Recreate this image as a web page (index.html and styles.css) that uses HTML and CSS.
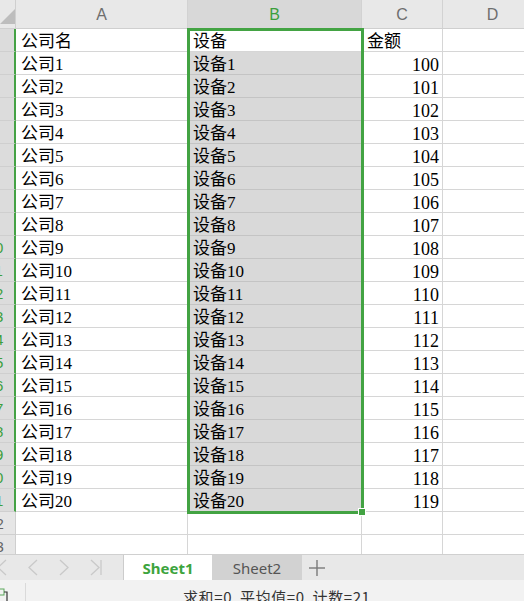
FILE: index.html
```html
<!DOCTYPE html>
<html>
<head>
<meta charset="utf-8">
<link rel="stylesheet" href="styles.css">
</head>
<body>
<div class="app">
  <div class="sheet">
    <div class="grid">
      <div class="row hdr">
        <div class="corner"><svg class="tri" width="34" height="28" viewBox="0 0 34 28"><polygon points="33,9 33,24 18,24" fill="#bdbdbd"/></svg></div>
        <div class="ch">A</div>
        <div class="ch on">B</div>
        <div class="ch">C</div>
        <div class="ch">D</div>
      </div>
      <div class="row"><div class="rh on">1</div><div class="c">公司名</div><div class="c act">设备</div><div class="c">金额</div><div class="c"></div></div>
      <div class="row"><div class="rh on">2</div><div class="c">公司1</div><div class="c sel">设备1</div><div class="c num">100</div><div class="c"></div></div>
      <div class="row"><div class="rh on">3</div><div class="c">公司2</div><div class="c sel">设备2</div><div class="c num">101</div><div class="c"></div></div>
      <div class="row"><div class="rh on">4</div><div class="c">公司3</div><div class="c sel">设备3</div><div class="c num">102</div><div class="c"></div></div>
      <div class="row"><div class="rh on">5</div><div class="c">公司4</div><div class="c sel">设备4</div><div class="c num">103</div><div class="c"></div></div>
      <div class="row"><div class="rh on">6</div><div class="c">公司5</div><div class="c sel">设备5</div><div class="c num">104</div><div class="c"></div></div>
      <div class="row"><div class="rh on">7</div><div class="c">公司6</div><div class="c sel">设备6</div><div class="c num">105</div><div class="c"></div></div>
      <div class="row"><div class="rh on">8</div><div class="c">公司7</div><div class="c sel">设备7</div><div class="c num">106</div><div class="c"></div></div>
      <div class="row"><div class="rh on">9</div><div class="c">公司8</div><div class="c sel">设备8</div><div class="c num">107</div><div class="c"></div></div>
      <div class="row"><div class="rh on">10</div><div class="c">公司9</div><div class="c sel">设备9</div><div class="c num">108</div><div class="c"></div></div>
      <div class="row"><div class="rh on">11</div><div class="c">公司10</div><div class="c sel">设备10</div><div class="c num">109</div><div class="c"></div></div>
      <div class="row"><div class="rh on">12</div><div class="c">公司11</div><div class="c sel">设备11</div><div class="c num">110</div><div class="c"></div></div>
      <div class="row"><div class="rh on">13</div><div class="c">公司12</div><div class="c sel">设备12</div><div class="c num">111</div><div class="c"></div></div>
      <div class="row"><div class="rh on">14</div><div class="c">公司13</div><div class="c sel">设备13</div><div class="c num">112</div><div class="c"></div></div>
      <div class="row"><div class="rh on">15</div><div class="c">公司14</div><div class="c sel">设备14</div><div class="c num">113</div><div class="c"></div></div>
      <div class="row"><div class="rh on">16</div><div class="c">公司15</div><div class="c sel">设备15</div><div class="c num">114</div><div class="c"></div></div>
      <div class="row"><div class="rh on">17</div><div class="c">公司16</div><div class="c sel">设备16</div><div class="c num">115</div><div class="c"></div></div>
      <div class="row"><div class="rh on">18</div><div class="c">公司17</div><div class="c sel">设备17</div><div class="c num">116</div><div class="c"></div></div>
      <div class="row"><div class="rh on">19</div><div class="c">公司18</div><div class="c sel">设备18</div><div class="c num">117</div><div class="c"></div></div>
      <div class="row"><div class="rh on">20</div><div class="c">公司19</div><div class="c sel">设备19</div><div class="c num">118</div><div class="c"></div></div>
      <div class="row"><div class="rh on">21</div><div class="c">公司20</div><div class="c sel">设备20</div><div class="c num">119</div><div class="c"></div></div>
      <div class="row"><div class="rh">22</div><div class="c"></div><div class="c"></div><div class="c"></div><div class="c"></div></div>
      <div class="row"><div class="rh">23</div><div class="c"></div><div class="c"></div><div class="c"></div><div class="c"></div></div>
      <div class="selbox"><div class="handle"></div></div>
    </div>
  </div>
  <div class="tabbar">
    <div class="nav">
      <svg width="123" height="25" viewBox="0 0 123 25">
        <g fill="none" stroke="#c9c9c9" stroke-width="1.3">
          <polyline points="6,5 -2,12.5 6,20"/>
          <polyline points="37,5 29,12.5 37,20"/>
          <polyline points="60,5 68,12.5 60,20"/>
          <polyline points="91,5 99,12.5 91,20"/>
          <line x1="101" y1="5" x2="101" y2="20"/>
        </g>
      </svg>
    </div>
    <div class="tab active">Sheet1</div>
    <div class="tab">Sheet2</div>
    <div class="add"><svg width="18" height="18" viewBox="0 0 18 18"><g stroke="#7a7a7a" stroke-width="1.4"><line x1="1" y1="9" x2="17" y2="9"/><line x1="9" y1="1" x2="9" y2="17"/></g></svg></div>
  </div>
  <div class="status">
    <div class="sicon"><svg width="25" height="21" viewBox="0 0 25 21"><rect x="-3" y="9" width="7" height="6" fill="none" stroke="#5aa85a" stroke-width="1"/><path d="M4 12 H7 V21" fill="none" stroke="#333" stroke-width="1.2"/></svg></div>
    <div class="stext">求和=0&nbsp;&nbsp;平均值=0&nbsp;&nbsp;计数=21</div>
  </div>
</div>
</body>
</html>
```
FILE: styles.css
```css
html, body {
  margin: 0;
  padding: 0;
  background: #ffffff;
}
body {
  width: 524px;
  height: 601px;
  overflow: hidden;
}
.app {
  display: flex;
  flex-direction: column;
  width: 524px;
  height: 601px;
}
.sheet {
  height: 554px;
  overflow: hidden;
  flex: none;
}
.grid {
  position: relative;
  margin-left: -18px;
  width: 560px;
}
.row {
  display: grid;
  grid-template-columns: 34px 172px 174px 81px 100px;
  height: 23px;
}
.row.hdr {
  height: 29px;
}
.corner {
  background: #e8e8e8;
  border-right: 1px solid #cfcfcf;
  border-bottom: 1px solid #cfcfcf;
  box-sizing: border-box;
  position: relative;
}
.tri {
  display: block;
}
.ch {
  background: #e8e8e8;
  border-right: 1px solid #d2d2d2;
  border-bottom: 1px solid #cfcfcf;
  box-sizing: border-box;
  display: flex;
  align-items: center;
  justify-content: center;
  font-family: "Liberation Sans", "Noto Sans", sans-serif;
  font-size: 16px;
  color: #6e6e6e;
  padding-top: 1px;
}
.ch.on {
  background: #d8d8d8;
  color: #3c9f3c;
}
.rh {
  background: #e6e6e6;
  border-right: 1px solid #cfcfcf;
  border-bottom: 1px solid #cfcfcf;
  box-sizing: border-box;
  display: flex;
  align-items: center;
  justify-content: center;
  font-family: "Liberation Sans", sans-serif;
  font-size: 15px;
  color: #666666;
  padding-right: 6px;
}
.rh.on {
  background: #dcdcdc;
  color: #3c9f3c;
  border-right: 2px solid #45a245;
}
.c {
  border-right: 1px solid #d6d6d6;
  border-bottom: 1px solid #d6d6d6;
  box-sizing: border-box;
  display: flex;
  align-items: flex-end;
  padding-left: 5px;
  padding-right: 3px;
  font-family: "Liberation Serif", "Noto Sans CJK SC", serif;
  font-size: 17px;
  line-height: 18px;
  color: #000000;
  white-space: nowrap;
  overflow: hidden;
}
.c.num {
  justify-content: flex-end;
  font-size: 18px;
}
.c.sel {
  background: #d9d9d9;
  border-bottom-color: #c4c4c4;
}
.selbox {
  position: absolute;
  left: 205px;
  top: 28px;
  width: 177px;
  height: 486px;
  box-sizing: border-box;
  border: 3px solid #43a343;
  pointer-events: none;
}
.handle {
  position: absolute;
  right: -5px;
  bottom: -5px;
  width: 6px;
  height: 6px;
  background: #43a343;
  border: 1px solid #ffffff;
}
.tabbar {
  flex: none;
  height: 26px;
  background: #e8e8e8;
  border-top: 1px solid #d0d0d0;
  box-sizing: border-box;
  display: flex;
  align-items: stretch;
}
.nav {
  width: 123px;
  flex: none;
}
.nav svg {
  display: block;
}
.tab {
  flex: none;
  width: 89px;
  display: flex;
  align-items: center;
  justify-content: center;
  font-family: "Noto Sans", "Liberation Sans", sans-serif;
  font-size: 15px;
  color: #555555;
  background: #d2d2d2;
  box-sizing: border-box;
}
.tab.active {
  background: #ffffff;
  border-left: 1px solid #cccccc;
  color: #3da43d;
  font-weight: bold;
}
.tab + .tab {
  width: 90px;
}
.add {
  width: 30px;
  display: flex;
  align-items: center;
  justify-content: center;
}
.add svg {
  display: block;
}
.status {
  flex: none;
  height: 21px;
  background: #f2f2f2;
  display: flex;
  overflow: hidden;
}
.sicon {
  width: 25px;
  flex: none;
  border-right: 1px solid #dadada;
  margin-top: 3px;
  overflow: hidden;
}
.sicon svg {
  display: block;
  margin-top: -3px;
}
.stext {
  padding-left: 157px;
  padding-top: 8px;
  font-family: "Noto Sans CJK SC", sans-serif;
  font-size: 15px;
  line-height: 18px;
  letter-spacing: 0.6px;
  color: #333333;
  white-space: nowrap;
}
```
